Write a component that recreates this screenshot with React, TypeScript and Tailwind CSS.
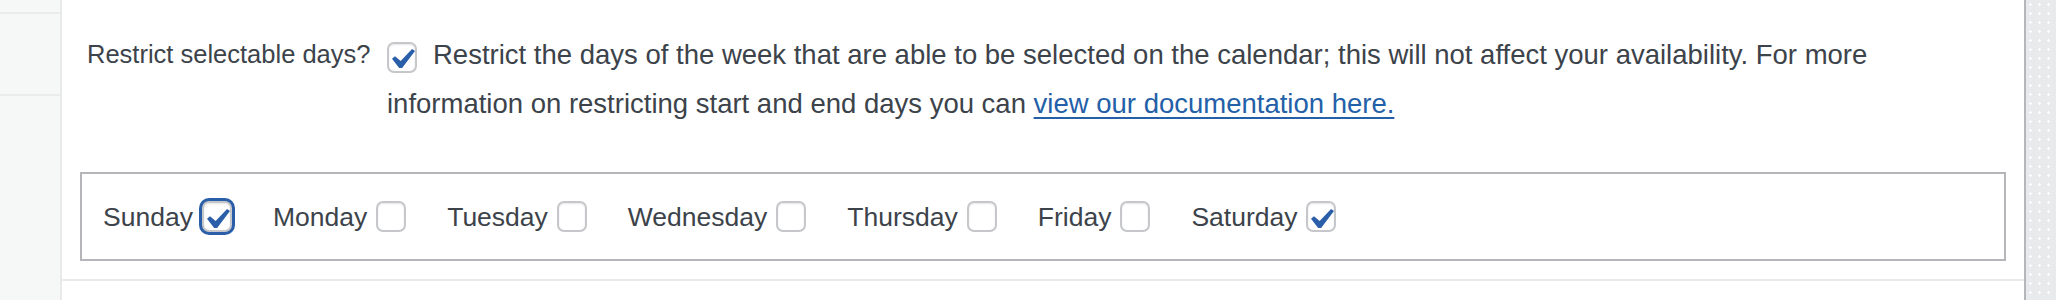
import clsx from "clsx";

const days = [
  { name: "Sunday", checked: true, focused: true },
  { name: "Monday", checked: false },
  { name: "Tuesday", checked: false },
  { name: "Wednesday", checked: false },
  { name: "Thursday", checked: false },
  { name: "Friday", checked: false },
  { name: "Saturday", checked: true },
];

function Checkbox({ checked, focused, className }: { checked?: boolean; focused?: boolean; className?: string }) {
  return (
    <span
      className={clsx(
        "inline-flex h-[31px] w-[30px] shrink-0 items-center justify-center rounded-[7px] border-2 border-[#c6c7ca] bg-white shadow-[inset_0_1px_2px_rgba(0,0,0,0.1)]",
        focused && "ring-[3px] ring-[#2a5ea9]",
        className
      )}
    >
      {checked && (
        <svg
          viewBox="5.78 4.89 10.39 9.32"
          preserveAspectRatio="none"
          className="ml-[3px] mt-[3px] h-[19px] w-[23px]"
        >
          <path fill="#2a5ea9" d="M14.83 4.89l1.34.94-5.81 8.38H9.02L5.78 9.67l1.34-1.25 2.57 2.4z" />
        </svg>
      )}
    </span>
  );
}

export default function App() {
  return (
    <div className="flex h-[300px] w-[2056px] overflow-hidden bg-white font-['Liberation_Sans',Arial,sans-serif] text-[#3c434a]">
      {/* Left admin strip */}
      <div className="flex w-[62px] shrink-0 flex-col border-r-2 border-[#e9e9e9] bg-[#f6f7f7]">
        <div className="h-[14px] border-b-2 border-[#ebebeb]" />
        <div className="h-[82px] border-b-2 border-[#ebebeb]" />
      </div>

      {/* Main settings panel */}
      <div className="flex flex-1 flex-col">
        <div className="flex flex-col px-[18px] pt-[30px]">
          <div className="flex items-start">
            <div className="w-[307px] shrink-0 pl-[7px] text-[25.5px] leading-[48px]">Restrict selectable days?</div>
            <div className="w-[1540px] text-[27.5px] leading-[49px]">
              <Checkbox checked className="mr-[16px] align-[-4px]" />
              Restrict the days of the week that are able to be selected on the calendar; this will not affect your
              availability. For more information on restricting start and end days you can{" "}
              <a href="#" className="text-[#2360a8] underline decoration-2 underline-offset-[4px]">
                view our documentation here.
              </a>
            </div>
          </div>

          <div className="mt-[44px] flex h-[89px] items-center gap-x-[41px] border-2 border-[#b5b6ba] pl-[21px]">
            {days.map((d) => (
              <div key={d.name} className="flex items-center gap-[9px]">
                <span className="text-[26.5px] leading-[36px]">{d.name}</span>
                <Checkbox checked={d.checked} focused={d.focused} />
              </div>
            ))}
          </div>
        </div>
        <div className="mt-[18px] border-b-2 border-[#e9e9e9]" />
      </div>

      {/* Right strip */}
      <div className="w-[32px] shrink-0 border-l-2 border-[#b5b6ba] bg-[#e9eaec] bg-[radial-gradient(circle,#ffffff_1px,transparent_1.2px)] bg-[length:9px_9px]" />
    </div>
  );
}
